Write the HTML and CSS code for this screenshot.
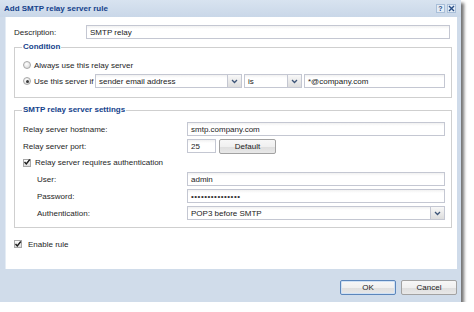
FILE: index.html
```html
<!DOCTYPE html>
<html lang="en">

<head>
    <meta charset="UTF-8">
    <title>Add SMTP relay server rule</title>
    <link rel="stylesheet" href="styles.css">
</head>

<body>

    <div class="window">
        <div class="titlebar">
            <span class="title">Add SMTP relay server rule</span>
            <span class="tools">
                <span class="tool">?</span>
                <span class="tool">
                    <svg width="7" height="7" viewBox="0 0 7 7">
                        <path d="M1 1 L6 6 M6 1 L1 6" stroke="#2a4f86" stroke-width="1.4" />
                    </svg>
                </span>
            </span>
        </div>

        <div class="body">
            <div class="row">
                <span class="desc-label">Description:</span>
                <div class="field desc-field">SMTP relay</div>
            </div>

            <fieldset class="group cond-group">
                <legend>Condition</legend>
                <div class="row">
                    <span class="radio"></span>
                    <span>Always use this relay server</span>
                </div>
                <div class="row">
                    <span class="radio checked"></span>
                    <span class="cond-label">Use this server if</span>
                    <div class="field combo combo-attr">
                        <span class="combo-text">sender email address</span>
                        <span class="trigger">
                            <svg width="7" height="5" viewBox="0 0 7 5">
                                <path d="M1 1 L3.5 3.5 L6 1" fill="none" stroke="#3d5578" stroke-width="1.3" />
                            </svg>
                        </span>
                    </div>
                    <div class="field combo combo-op">
                        <span class="combo-text">is</span>
                        <span class="trigger">
                            <svg width="7" height="5" viewBox="0 0 7 5">
                                <path d="M1 1 L3.5 3.5 L6 1" fill="none" stroke="#3d5578" stroke-width="1.3" />
                            </svg>
                        </span>
                    </div>
                    <div class="field value-field">*@company.com</div>
                </div>
            </fieldset>

            <fieldset class="group settings-group">
                <legend>SMTP relay server settings</legend>
                <div class="row">
                    <span class="label">Relay server hostname:</span>
                    <div class="field wide">smtp.company.com</div>
                </div>
                <div class="row">
                    <span class="label">Relay server port:</span>
                    <div class="field port-field">25</div>
                    <span class="button default-btn">Default</span>
                </div>
                <div class="row check-row">
                    <span class="check">
                        <svg width="8" height="8" viewBox="0 0 8 8">
                            <path d="M1.5 4 L3.3 6 L6.8 1.5" fill="none" stroke="#1d1d1d" stroke-width="1.4" />
                        </svg>
                    </span>
                    <span>Relay server requires authentication</span>
                </div>
                <div class="row sub">
                    <span class="label">User:</span>
                    <div class="field wide">admin</div>
                </div>
                <div class="row sub">
                    <span class="label">Password:</span>
                    <div class="field wide dots">&bull;&bull;&bull;&bull;&bull;&bull;&bull;&bull;&bull;&bull;&bull;&bull;&bull;&bull;&bull;</div>
                </div>
                <div class="row sub">
                    <span class="label">Authentication:</span>
                    <div class="field combo wide">
                        <span class="combo-text">POP3 before SMTP</span>
                        <span class="trigger">
                            <svg width="7" height="5" viewBox="0 0 7 5">
                                <path d="M1 1 L3.5 3.5 L6 1" fill="none" stroke="#3d5578" stroke-width="1.3" />
                            </svg>
                        </span>
                    </div>
                </div>
            </fieldset>

            <div class="row enable-row">
                <span class="check">
                    <svg width="8" height="8" viewBox="0 0 8 8">
                        <path d="M1.5 4 L3.3 6 L6.8 1.5" fill="none" stroke="#1d1d1d" stroke-width="1.4" />
                    </svg>
                </span>
                <span>Enable rule</span>
            </div>
        </div>

        <div class="footer">
            <span class="button ok-btn">OK</span>
            <span class="button">Cancel</span>
        </div>
    </div>

</body>

</html>
```

FILE: styles.css
```css
body {
    margin: 0;
    background: #ffffff;
    font-family: "Liberation Sans", Arial, sans-serif;
    font-size: 8px;
    color: #1e1e1e;
}

.window {
    width: 461px;
    height: 302px;
    background: #cfdbea;
    box-shadow: 3px 3px 3px rgba(0, 0, 0, 0.55);
}

.titlebar {
    height: 17px;
    display: flex;
    align-items: center;
    justify-content: space-between;
    padding: 0 4px;
    background: linear-gradient(#d8e3f0, #c9d7e8);
}

.title {
    font-weight: bold;
    color: #15428b;
    font-size: 8px;
}

.tools {
    display: flex;
    gap: 2px;
    margin-right: 1px;
}

.tool {
    width: 9px;
    height: 9px;
    box-sizing: border-box;
    border: 1px solid #a9bfd9;
    background: #e3ecf6;
    color: #2a4f86;
    font-size: 7px;
    font-weight: bold;
    display: flex;
    align-items: center;
    justify-content: center;
    line-height: 1;
}

.body {
    height: 252px;
    box-sizing: border-box;
    margin: 0 4px 0 5px;
    padding: 8px 7px 0 8px;
    background: #ffffff;
    border-left: 1px solid #e4ecf5;
}

.row {
    display: flex;
    align-items: center;
    height: 14px;
}

.desc-label {
    width: 72px;
}

.field {
    height: 14px;
    box-sizing: border-box;
    border: 1px solid #c4c7d2;
    background: linear-gradient(#f1f1f1, #ffffff 3px);
    padding-left: 3px;
    display: flex;
    align-items: center;
    color: #222;
}

.desc-field {
    flex: 1;
}

.group {
    margin: 3px 0 0 0;
    padding: 6px 6px 9px 7px;
    border: 1px solid #cfcfcf;
}

.group legend {
    padding: 0 1px;
    font-weight: bold;
    color: #15428b;
    line-height: 10px;
}

.cond-group .row + .row {
    margin-top: 2px;
}

.radio {
    width: 8px;
    height: 8px;
    box-sizing: border-box;
    border-radius: 50%;
    border: 1px solid #a7a7a7;
    background: radial-gradient(circle at 40% 35%, #ffffff, #d2d2d2);
    margin: 0 3px 0 1px;
    position: relative;
}

.radio.checked::after {
    content: "";
    position: absolute;
    left: 1.5px;
    top: 1.5px;
    width: 3px;
    height: 3px;
    border-radius: 50%;
    background: #3a3a3a;
}

.cond-label {
    width: 61px;
}

.combo {
    padding-right: 0;
    justify-content: space-between;
}

.combo-text {
    white-space: nowrap;
}

.trigger {
    width: 13px;
    height: 12px;
    border-left: 1px solid #c4c7d2;
    background: linear-gradient(#f8f8f8, #dddddd);
    display: flex;
    align-items: center;
    justify-content: center;
}

.combo-attr {
    width: 147px;
    margin-right: 2px;
}

.combo-op {
    width: 58px;
    margin-right: 2px;
}

.value-field {
    width: 141px;
}

.settings-group {
    margin-top: 7px;
    padding: 7px 6px 7px 7px;
}

.settings-group .row + .row {
    margin-top: 3px;
}

.settings-group .check-row {
    height: 13px;
}

.label {
    width: 164px;
    padding-left: 1px;
}

.sub .label {
    width: 150px;
    padding-left: 15px;
}

.wide {
    width: 258px;
}

.port-field {
    width: 29px;
    margin-right: 3px;
}

.dots {
    letter-spacing: 0.5px;
    font-size: 8px;
    color: #333;
}

.check {
    width: 8px;
    height: 8px;
    box-sizing: border-box;
    border: 1px solid #a7a7a7;
    background: linear-gradient(#ffffff, #dcdcdc);
    margin: 0 4px 0 1px;
    display: flex;
    align-items: center;
    justify-content: center;
}

.check svg {
    margin-top: -1px;
    flex: none;
}

.enable-row {
    margin-top: 10px;
    height: 12px;
}

.enable-row .check {
    margin-left: 0;
    margin-right: 6px;
}

.button {
    width: 57px;
    height: 15px;
    box-sizing: border-box;
    border: 1px solid #a2a2a2;
    border-radius: 2px;
    background: linear-gradient(#f7f7f7, #f0f0f0 50%, #dedede 51%, #e8e8e8);
    display: flex;
    align-items: center;
    justify-content: center;
    color: #222;
}

.default-btn {
    width: 57px;
}

.footer {
    height: 33px;
    box-sizing: border-box;
    display: flex;
    justify-content: flex-end;
    gap: 5px;
    padding: 11px 4px 0 0;
    background: #d0dcea;
}

.footer .button {
    width: 56px;
}

.ok-btn {
    border-color: #5c86bb;
    box-shadow: inset 0 0 0 1px #cfe1f5;
}
```
